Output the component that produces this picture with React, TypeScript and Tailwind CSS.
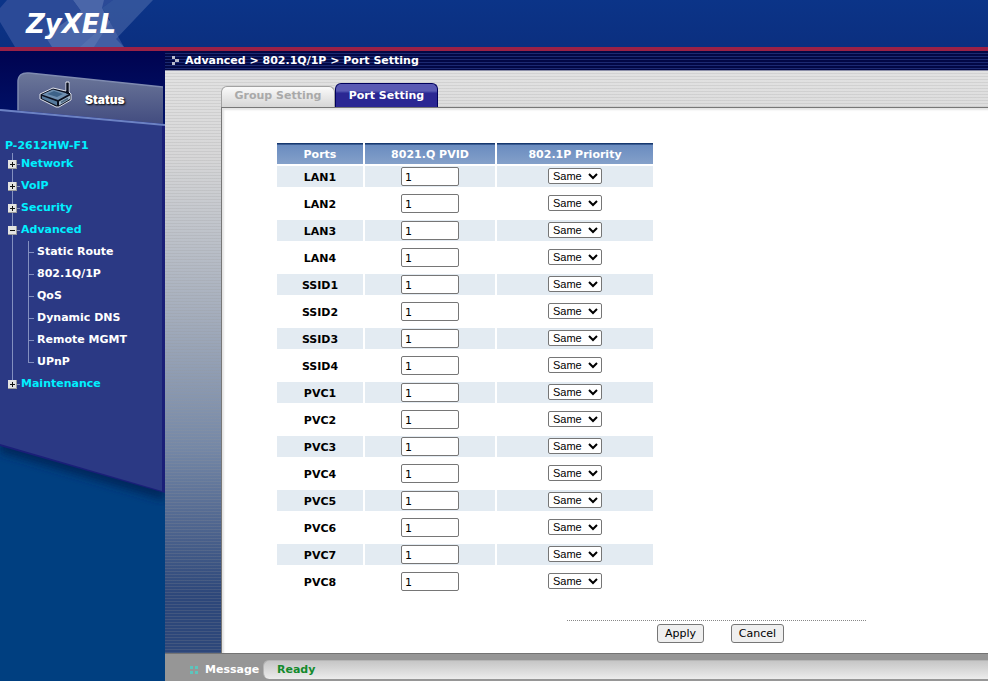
import React from "react";

const PORTS = [
  "LAN1", "LAN2", "LAN3", "LAN4",
  "SSID1", "SSID2", "SSID3", "SSID4",
  "PVC1", "PVC2", "PVC3", "PVC4",
  "PVC5", "PVC6", "PVC7", "PVC8",
];

const MENU = [
  { label: "Network" },
  { label: "VoIP" },
  { label: "Security" },
  {
    label: "Advanced",
    children: ["Static Route", "802.1Q/1P", "QoS", "Dynamic DNS", "Remote MGMT", "UPnP"],
  },
  { label: "Maintenance" },
];

function Header() {
  return (
    <header className="relative h-[51px] border-b-4 border-[#9b2146] bg-linear-to-b from-[#0b3488] to-[#0b2f80]">
      <svg className="absolute left-0 top-0" width="160" height="47" viewBox="0 0 160 47" aria-hidden="true">
        <path d="M0 0 H73 L81 11 L60 47 H15 L0 22Z" fill="#2b4a97" />
        <path d="M0 0 H7 L0 8Z" fill="#0b3488" />
        <path d="M73 0 H113 L102 8 L124 47 H52 L81 11Z" fill="#2b4a97" />
        <path d="M73 0 H104 L102 8 L110 22 L94 47 H52 L45 36 L81 11Z" fill="#4a66a9" />
        <path d="M113 0 H153 L116 39 L124 47 H80 L110 20 L102 8Z" fill="#5f7ab4" fillOpacity=".45" />
      </svg>
      <h1 className="relative pl-[26px] pt-2 text-[26px] font-bold italic leading-[32px] text-white">
        ZyXEL
      </h1>
    </header>
  );
}

function RouterIcon() {
  return (
    <svg width="34" height="28" viewBox="0 0 34 28" aria-hidden="true">
      <path d="M1 13 L14 7 L27 10 V1 H30 V11 L32 13 V19 L20 26 L17 26 L1 18Z" fill="#0b1020" stroke="#e2e5ee" />
      <path d="M3 13.5 L14 8.500 L30 13 L19 19Z" fill="#6f8fb0" />
      <path d="M8 13 L15 10 L24 13 L18 16Z" fill="#3d6288" />
      <path d="M3 15 L18 20.500 V24.500 L3 17.500Z" fill="#55799c" />
      <path d="M20 20.500 L31 14.500 V18 L20 24.500Z" fill="#9db2c6" />
      <path d="M22 21.500 L29 17.500" stroke="#4a6680" strokeWidth="1.500" />
      <path d="M28.500 2 V13" stroke="#0b1020" strokeWidth="2" />
    </svg>
  );
}

function SidebarArt() {
  return (
    <svg className="absolute left-0 top-0" width="165" height="460" viewBox="0 51 165 460" aria-hidden="true">
      <defs>
        <linearGradient id="night" x1="0" y1="0" x2="0" y2="1">
          <stop offset="0" stopColor="#000350" />
          <stop offset="1" stopColor="#00146c" />
        </linearGradient>
        <linearGradient id="statusTab" x1="0" y1="0" x2="0" y2="1">
          <stop offset="0" stopColor="#6c7799" />
          <stop offset="1" stopColor="#424c80" />
        </linearGradient>
        <filter id="soft" x="-10%" y="-10%" width="120%" height="120%">
          <feGaussianBlur stdDeviation="4" />
        </filter>
      </defs>
      <rect y="51" width="165" height="80" fill="url(#night)" />
      <path d="M18 112 V82 Q18 72 29 73 L163 87 V124Z" fill="url(#statusTab)" />
      <path d="M18 112 V82 Q18 72 29 73 L163 87" fill="none" stroke="#7f8bb0" strokeWidth="1.5" />
      <path d="M0 440 L165 488 V500 L0 452Z" fill="#00285a" filter="url(#soft)" />
      <path d="M0 109 L165 124 V493 L0 446Z" fill="#1a1f78" />
      <path d="M0 109 L162 124 V491 L0 444Z" fill="#2b3984" />
      <path d="M0 110 L165 125" stroke="#6c82c4" strokeWidth="2" />
    </svg>
  );
}

function Toggle({ open }: { open: boolean }) {
  return (
    <svg width="13" height="9" viewBox="0 0 13 9" shapeRendering="crispEdges" aria-hidden="true">
      <rect width="9" height="9" fill="#e4e4e2" />
      <path d="M0 8.5 H9 M8.5 0 V9" stroke="#9b9b9b" />
      <path d="M2 4.5 H7" stroke="#111" />
      {!open && <path d="M4.5 2 V7" stroke="#111" />}
      <path d="M9 4.5 H12" stroke="#8390c0" />
    </svg>
  );
}

function Sidebar() {
  return (
    <aside className="relative w-[165px] shrink-0 bg-[#003f80]">
      <SidebarArt />
      <div className="relative">
        <a href="#status" className="flex h-[88px] items-start gap-3 pl-[39px] pt-[30px] text-white">
          <RouterIcon />
          <span className="pt-[11px] font-['Inter',sans-serif] text-[12px] font-black leading-4 [text-shadow:1px_1px_2px_#000]">
            Status
          </span>
        </a>
        <nav aria-label="Main">
          <p className="pl-[5px] leading-[14px] text-[#00f0ff]">P-2612HW-F1</p>
          <ul className="bg-[linear-gradient(#8390c0,#8390c0)] bg-[length:1px_calc(100%-11px)] bg-[position:12px_0] bg-no-repeat leading-[22px] text-[#00f0ff]">
            {MENU.map((item) => (
              <li key={item.label}>
                <a href={"#" + item.label} className="flex items-center pl-2">
                  <Toggle open={!!item.children} />
                  {item.label}
                </a>
                {item.children && (
                  <ul className="bg-[linear-gradient(#8390c0,#8390c0)] bg-[length:1px_calc(100%-11px)] bg-[position:28px_0] bg-no-repeat pl-[28px] text-white">
                    {item.children.map((c) => (
                      <li key={c}>
                        <a href={"#" + c} className="flex items-center gap-[3px]">
                          <span className="h-px w-[6px] bg-[#8390c0]" />
                          {c}
                        </a>
                      </li>
                    ))}
                  </ul>
                )}
              </li>
            ))}
          </ul>
        </nav>
      </div>
    </aside>
  );
}

function Breadcrumb() {
  return (
    <div className="flex h-5 items-center gap-[6px] border-b border-[#8d90a8] bg-[repeating-linear-gradient(#020845_0_2px,#1c2a72_2px_3px)] pl-[7px] text-white">
      <svg width="7" height="9" viewBox="0 0 7 9" shapeRendering="crispEdges" aria-hidden="true">
        <path d="M0 0h3v3h-3z M3 3h4v3h-4z M0 6h3v3h-3z" fill="#b9bccc" />
      </svg>
      <span>Advanced &gt; 802.1Q/1P &gt; Port Setting</span>
    </div>
  );
}

function Tabs() {
  return (
    <div role="tablist" className="flex h-9 items-end">
      <button
        role="tab"
        aria-selected="false"
        className="h-[21px] w-[114px] rounded-t-md border border-b-0 border-[#a2a2a2] bg-linear-to-b from-[#fafafa] to-[#d6d6d6] pb-[2px] font-bold text-[#a9a9a9]"
      >
        Group Setting
      </button>
      <button
        role="tab"
        aria-selected="true"
        className="h-6 w-[103px] rounded-t-md border border-b-0 border-[#00005c] bg-linear-to-b from-[#5a5ab4] from-30% to-[#2b2793] to-40% font-bold text-white"
      >
        Port Setting
      </button>
    </div>
  );
}

const TH =
  "h-[23px] border-b-2 border-white bg-linear-to-b from-[#16386f] from-5% via-[#6a8cc0] via-10% to-[#84a0c9] bg-clip-padding px-0 pb-0 pt-[2px] font-bold text-white";

function PortTable() {
  return (
    <table className="table-fixed border-separate border-spacing-x-[2px] border-spacing-y-0 text-center">
      <thead>
        <tr>
          <th className={TH + " w-[86px]"}>Ports</th>
          <th className={TH + " w-[130px]"}>8021.Q PVID</th>
          <th className={TH + " w-[156px]"}>802.1P Priority</th>
        </tr>
      </thead>
      <tbody>
        {PORTS.map((p) => (
          <tr key={p} className="group">
            <td className="h-[27px] border-b-[6px] border-white bg-clip-padding px-0 pb-0 pt-[2px] group-odd:bg-[#e3ebf2]">{p}</td>
            <td className="border-b-[6px] border-white bg-clip-padding p-0 group-odd:bg-[#e3ebf2]">
              <input
                aria-label={p + " PVID"}
                defaultValue="1"
                className="mx-auto block h-[19px] w-[58px] rounded-[2px] border border-[#767676] bg-white px-[3px] pt-px font-normal text-black"
              />
            </td>
            <td className="border-b-[6px] border-white bg-clip-padding px-0 pb-[2px] pt-0 group-odd:bg-[#e3ebf2]">
              <select
                aria-label={p + " priority"}
                className="mx-auto block h-4 w-[54px] rounded-[2px] border border-[#767676] bg-white font-['Liberation_Sans',sans-serif] text-[11px] font-normal leading-[14px] text-black"
              >
                <option>Same</option>
                {[0, 1, 2, 3, 4, 5, 6, 7].map((n) => (
                  <option key={n}>{n}</option>
                ))}
              </select>
            </td>
          </tr>
        ))}
      </tbody>
    </table>
  );
}

function Footer() {
  return (
    <footer className="flex h-7 items-stretch border-t border-[#747474] bg-[#969696] pb-[2px] pt-[6px]">
      <div className="flex w-[98px] items-center gap-[6px] pl-[25px] text-white">
        <svg width="9" height="8" viewBox="0 0 9 8" shapeRendering="crispEdges" aria-hidden="true">
          <path d="M0 0h3v3h-3z M5 0h3v3h-3z M0 5h3v3h-3z M5 5h3v3h-3z" fill="#5cc5bd" />
        </svg>
        Message
      </div>
      <output className="flex flex-1 items-center rounded-l-md border-l border-t border-[#b5b5b5] bg-linear-to-b from-[#c6c6c6] to-[#ececec] pl-[13px] text-[#138a2c]">
        Ready
      </output>
    </footer>
  );
}

export default function App() {
  return (
    <div className="flex min-h-screen flex-col font-['DejaVu_Sans',Verdana,sans-serif] text-[11px] font-bold leading-[14px]">
      <Header />
      <div className="flex flex-1">
        <Sidebar />
        <div className="flex min-w-0 flex-1 flex-col">
          <Breadcrumb />
          <main className="flex flex-1 flex-col bg-[repeating-linear-gradient(transparent_0_2px,rgb(150_150_150/0.2)_2px_3px),linear-gradient(#e2e2e2,#d6d6d7_15%,#a4adbc_42%,#7487a6_65%,#2d477a_90%,#2d477a)] pl-14">
            <Tabs />
            <form
              className="flex-1 border-l border-t border-[#777] bg-white pb-[10px] pl-[53px] pt-[35px] shadow-[inset_2px_2px_2px_#e4e4e4]"
              onSubmit={(e) => e.preventDefault()}
            >
              <PortTable />
              <div className="ml-[292px] mt-[22px] w-[299px] border-t border-dotted border-[#888]" />
              <div className="ml-[382px] mt-[3px] flex gap-[27px]">
                <button type="submit" className="h-[19px] w-[47px] rounded-[3px] border border-[#767676] bg-[#efefef] pt-px font-normal text-black">
                  Apply
                </button>
                <button type="reset" className="h-[19px] w-[53px] rounded-[3px] border border-[#767676] bg-[#efefef] pt-px font-normal text-black">
                  Cancel
                </button>
              </div>
            </form>
          </main>
          <Footer />
        </div>
      </div>
    </div>
  );
}
